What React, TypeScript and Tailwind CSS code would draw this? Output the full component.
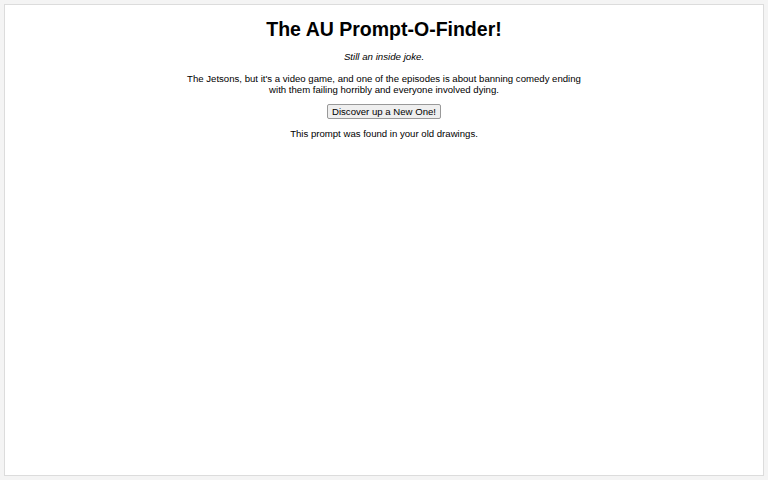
export default function App() {
  return (
    <div className="h-[480px] bg-[#f4f4f4] p-[4px] font-['Liberation_Sans',Arial,sans-serif] text-black">
      <div className="h-full border border-[#dcdcdc] bg-white flex flex-col items-center text-center">
        <h1 className="mt-[12px] text-[19.5px] font-bold leading-[24px]">The AU Prompt-O-Finder!</h1>
        <p className="mt-[9px] text-[9.7px] italic leading-[13px]">Still an inside joke.</p>
        <p className="mt-[10px] w-[400px] text-[9.6px] leading-[11px]">
          The Jetsons, but it's a video game, and one of the episodes is about banning comedy ending with them failing horribly and everyone involved dying.
        </p>
        <button className="mt-[9px] px-[4px] h-[15px] text-[9.6px] leading-[13px] bg-[#efefef] border border-[#999] rounded-[2px]">
          Discover up a New One!
        </button>
        <p className="mt-[8px] text-[9.6px] leading-[13px]">This prompt was found in your old drawings.</p>
      </div>
    </div>
  );
}
